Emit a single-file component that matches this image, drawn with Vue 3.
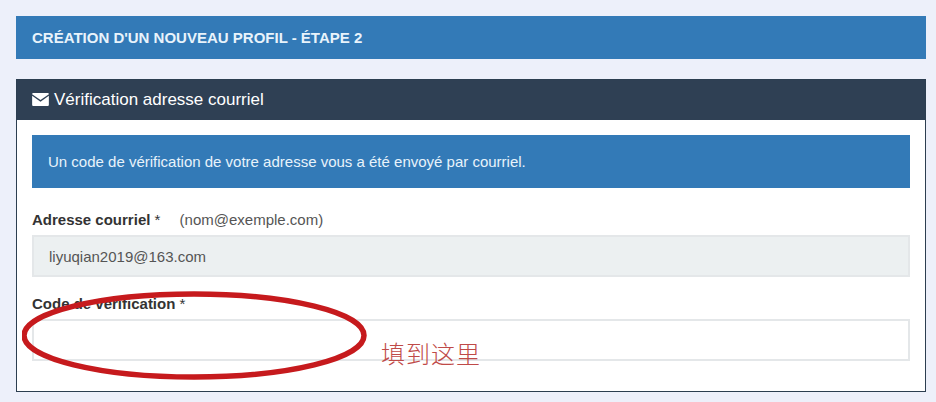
<template>
  <div class="page">
    <div class="title-bar">CRÉATION D'UN NOUVEAU PROFIL - ÉTAPE 2</div>

    <div class="panel">
      <div class="panel-head">
        <svg class="mail-icon" viewBox="0 0 18 14" width="17" height="13">
          <path d="M1.4 0h15.2c.8 0 1.4.6 1.4 1.3L9 7.6 0 1.3C0 .6.6 0 1.4 0z" fill="#fff" />
          <path d="M0 3l9 6.3L18 3v9.6c0 .8-.6 1.4-1.4 1.4H1.4C.6 14 0 13.4 0 12.6z" fill="#fff" />
        </svg>
        <span>Vérification adresse courriel</span>
      </div>

      <div class="panel-body">
        <div class="info">Un code de vérification de votre adresse vous a été envoyé par courriel.</div>

        <div class="field">
          <label class="label"><b>Adresse courriel</b> * <span class="hint">(nom@exemple.com)</span></label>
          <div class="input disabled">liyuqian2019@163.com</div>
        </div>

        <div class="field second">
          <label class="label"><b>Code de vérification</b> *</label>
          <div class="input"></div>
        </div>

        <!-- annotation drawn over the form -->
        <svg class="oval" viewBox="0 0 360 110" width="360" height="110">
          <ellipse cx="172" cy="55.5" rx="170" ry="41.5" fill="none" stroke="#c61a1d" stroke-width="5.5" />
        </svg>
        <span class="note">填到这里</span>
      </div>
    </div>
  </div>
</template>

<script setup>
</script>

<style>
html,
body {
  margin: 0;
  background: #edf0fa;
}
</style>

<style scoped>
.page {
  width: 936px;
  height: 402px;
  box-sizing: border-box;
  padding: 16px 10px 10px 16px;
  font-family: "Liberation Sans", Arial, sans-serif;
  color: #333;
  overflow: hidden;
}

.title-bar {
  height: 43px;
  box-sizing: border-box;
  padding-left: 16px;
  background: #337ab7;
  color: #e8f3fb;
  font-size: 15px;
  font-weight: bold;
  line-height: 44px;
}

.panel {
  margin-top: 20px;
  height: 313px;
  box-sizing: border-box;
  border: 1px solid #2c3e50;
  background: #fff;
}

.panel-head {
  height: 40px;
  display: flex;
  align-items: center;
  gap: 5px;
  padding-left: 15px;
  background: #2f4054;
  color: #fff;
  font-size: 17px;
}

.mail-icon {
  margin-top: -2px;
}

.panel-body {
  position: relative;
  padding: 15px 15px 0;
}

.info {
  height: 53px;
  box-sizing: border-box;
  padding-left: 16px;
  background: #337ab7;
  color: #e8f3fb;
  font-size: 15px;
  line-height: 54px;
}

.field {
  margin-top: 22px;
}

.field.second {
  margin-top: 17px;
}

.label {
  display: block;
  height: 25px;
  font-size: 15px;
  line-height: 20px;
}

.hint {
  margin-left: 15px;
  color: #555;
}

.input {
  height: 42px;
  box-sizing: border-box;
  padding-left: 15px;
  border: 2px solid #e4e7e9;
  font-size: 15px;
  line-height: 39px;
  color: #555;
}

.disabled {
  background: #ecf0f1;
}

.oval {
  position: absolute;
  left: 5px;
  top: 160px;
}

.note {
  position: absolute;
  left: 364px;
  top: 218px;
  font-family: "Noto Sans CJK SC", sans-serif;
  font-size: 24px;
  font-weight: 300;
  letter-spacing: 1px;
  line-height: 30px;
  color: #bf4a48;
}
</style>
